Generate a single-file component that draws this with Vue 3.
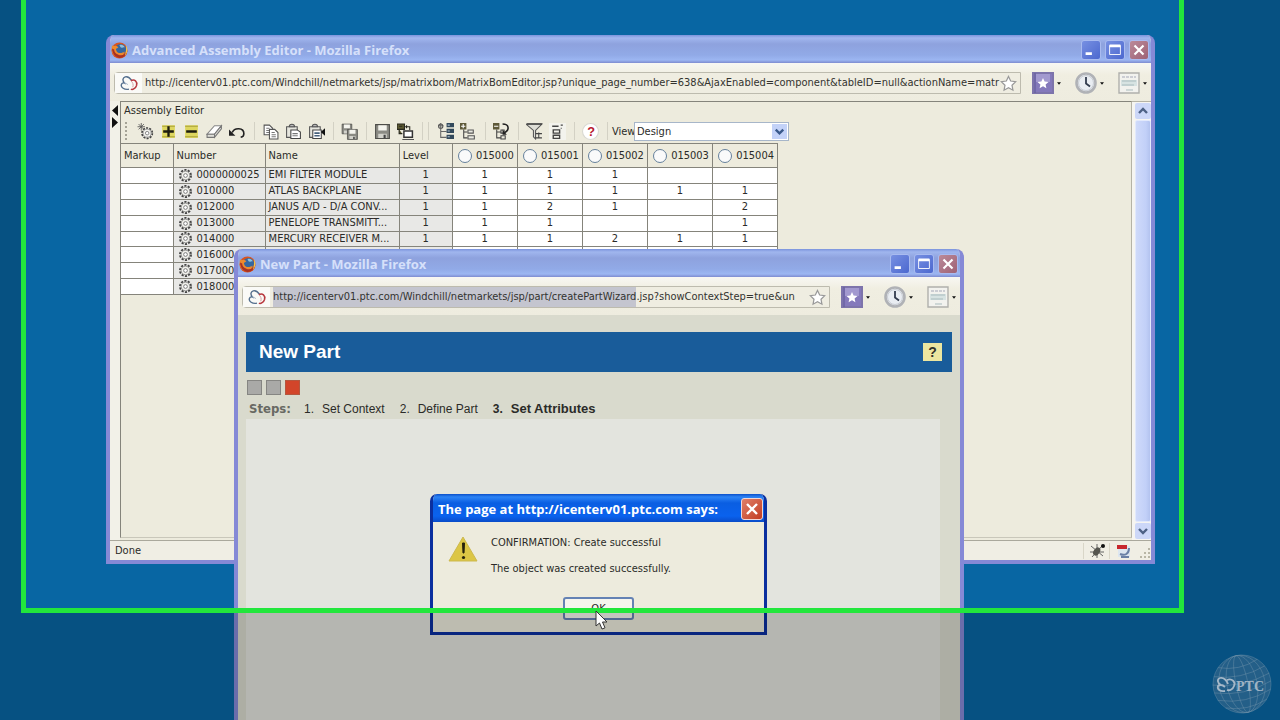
<script setup>
import { ref, onMounted } from 'vue'

const editorUrl = ref('http://icenterv01.ptc.com/Windchill/netmarkets/jsp/matrixbom/MatrixBomEditor.jsp?unique_page_number=638&AjaxEnabled=component&tableID=null&actionName=matr')
const partUrl = ref('http://icenterv01.ptc.com/Windchill/netmarkets/jsp/part/createPartWizard.jsp?showContextStep=true&un')
const partUrlInput = ref(null)
const view = ref('Design')

const gear = '<circle cx="8" cy="8" r="5.6" fill="#f4f4ee" stroke="#444" stroke-width="2.6" stroke-dasharray="2.2 1.3"/><circle cx="8" cy="8" r="5" fill="#f1f1ec"/><circle cx="8" cy="8" r="4.6" fill="none" stroke="#777" stroke-width=".8"/><circle cx="8" cy="8" r="2" fill="#fff" stroke="#777"/>'
const page = '<path d="M2 2h5l3 3v6H2z" fill="#fff" stroke="#555"/><path d="M4 5h3M4 7h4M4 9h4" stroke="#777"/>'
const clip = '<path d="M1.5 3.5h10v10h-10z" fill="#e6e6de" stroke="#555"/><path d="M4 3.5c0-3 5-3 5 0z" fill="#bbb" stroke="#555"/>'
const disk = '<path d="M1.5 1.5h13v13h-13z" fill="#8b8b84" stroke="#4d4d49"/><path d="M4 2h8v5H4z" fill="#f4f4ee"/><path d="M4 10h8v4H4z" fill="#d2d2cb"/><path d="M9 11h2v3H9z" fill="#444"/>'

// ツールバーのアイコン（sepは区切り線）
const tools = [
  { name: 'New', svg: '<g transform="translate(3 3) scale(.82)">' + gear + '</g><path d="M4 0v7M.5 3.5h7M1.5 1l5 5M6.5 1l-5 5" stroke="#555" stroke-width=".8"/>' },
  { name: 'Add', svg: '<path d="M2 2h12v12H2z" fill="#ddd65f"/><path d="M2 3h12M2 13h12" stroke="#a9a13b"/><path d="M8 3v10M3 8h10" stroke="#1b1b10" stroke-width="2.2"/>' },
  { name: 'Remove', svg: '<path d="M2 2h12v12H2z" fill="#ddd65f"/><path d="M2 3h12M2 13h12" stroke="#a9a13b"/><path d="M3 8h10" stroke="#1b1b10" stroke-width="2.4"/>' },
  { name: 'Erase', svg: '<path d="M1 10.500 8 2.500h6.500L8 10.500z" fill="#fff" stroke="#888"/><path d="M1 10.500v3h7v-3zM8 13.500l6.500-8v-3L8 10.500z" fill="#e0e0da" stroke="#777"/>' },
  { name: 'Undo', svg: '<path d="M3 9c2-5 11-5 11 1 0 1.500-1 3-3 3.500" fill="none" stroke="#222" stroke-width="1.500"/><path d="M0 6v6h6z" fill="#222"/>' },
  { sep: 10 },
  { name: 'Copy', svg: page + '<g transform="translate(5 4)">' + page + '</g>' },
  { name: 'Paste', svg: clip + '<path d="M5.500 6.500h6l3 2v6h-9z" fill="#fff" stroke="#444"/><path d="M7 10h5M7 12h5" stroke="#777"/>' },
  { name: 'Paste special', svg: clip + '<path d="M4.500 6.500h8v8h-8z" fill="#fff" stroke="#444"/><path d="M6 9.500h5M6 12h5" stroke="#47617c" stroke-width="1.500"/><path d="M16 5v7l-4-3.500z" fill="#111"/>' },
  { sep: 10 },
  { name: 'Save all', svg: '<g transform="scale(.7)">' + disk + '</g><g transform="translate(5 5) scale(.72)">' + disk + '</g>' },
  { sep: 10 },
  { name: 'Save', svg: disk },
  { name: 'Check in', svg: '<path d="M0 1h7v5H0zM2 6v4h3" fill="#5c5931" stroke="#28281f"/><path d="M2 3h3M9 2v3M7 3.500h5v3" stroke="#28281f" fill="none"/><path d="M6.500 7.500h8v6h-8z" fill="#fff" stroke="#333" stroke-width="1.400"/><path d="M5 15.500h11" stroke="#555"/>' },
  { sep: 17, double: true },
  { name: 'Expand all', svg: '<path d="M1 2.500h5M3.500 0v14M3.500 8H9M3.500 13.500H9" stroke="#666" fill="none"/><circle cx="3.500" cy="3" r="2" fill="none" stroke="#555"/><path d="M9 0h7v4H9zM9 5.500h7v4H9zM9 11h7v4H9z" fill="#33495c"/><path d="M10 2h2M10 7.500h2M10 13h2" stroke="#b7c9d6"/>' },
  { name: 'Expand', svg: '<path d="M0 0h6v6H0z" fill="#5f5a39"/><path d="M1 3h4M3 1v4" stroke="#fff"/><path d="M3.500 6v8H7M3.500 8.500H7" stroke="#444" fill="none"/><path d="M7.500 6.500h5v3h-5zM7.500 12h6v3h-6z" fill="#e9e9e1" stroke="#555"/>' },
  { sep: 10 },
  { name: 'Collapse', svg: '<path d="M0 0h6v6H0z" fill="#5f5a39"/><path d="M1 3h4" stroke="#fff"/><path d="M3.500 6v8H7M3.500 8.500H7M7.500 6.500h3v3h-3zM7.500 12h4v3h-4z" stroke="#444" fill="none"/><path d="M9 1c6 0 7 5 2 8" stroke="#222" stroke-width="1.500" fill="none"/><path d="M9 6v5h4z" fill="#222"/>' },
  { sep: 10 },
  { name: 'Filter', svg: '<path d="M0 1h15L9 7v8L7 13V7z" fill="#deded6" stroke="#555"/><path d="M1 1h14" stroke="#444" stroke-width="1.500"/><path d="M9 10h6M9 14h6M12 9v5" stroke="#444"/>' },
  { name: 'Structure', svg: '<path d="M0 0h16v16H0z" fill="#f3f3ed"/><path d="M4 6.500h6v3H4zM4 11.500h6v3H4z" fill="none" stroke="#444" stroke-width="1.300"/><path d="M3 3h6" stroke="#444" stroke-width="1.500"/><path d="M11 2h2M11 5h1" stroke="#444"/>' },
  { sep: 10 },
  { name: 'Help', svg: '<circle cx="8" cy="8" r="7.500" fill="#fff" stroke="#d8d8d0"/><text x="5" y="12" font-family="Liberation Sans, sans-serif" font-weight="bold" font-size="12" fill="#b7182f">?</text>' },
  { sep: 10 }
]

const variants = ['015000', '015001', '015002', '015003', '015004']

const parts = [
  { number: '0000000025', name: 'EMI FILTER MODULE', level: '1', qty: ['1', '1', '1', '', ''] },
  { number: '010000', name: 'ATLAS BACKPLANE', level: '1', qty: ['1', '1', '1', '1', '1'] },
  { number: '012000', name: 'JANUS A/D - D/A CONV...', level: '1', qty: ['1', '2', '1', '', '2'] },
  { number: '013000', name: 'PENELOPE TRANSMITT...', level: '1', qty: ['1', '1', '', '', '1'] },
  { number: '014000', name: 'MERCURY RECEIVER M...', level: '1', qty: ['1', '1', '2', '1', '1'] },
  { number: '016000', name: '', level: '', qty: ['', '', '', '', ''] },
  { number: '017000', name: '', level: '', qty: ['', '', '', '', ''] },
  { number: '018000', name: '', level: '', qty: ['', '', '', '', ''] }
]

const firefox = '<circle cx="8" cy="8" r="7.500" fill="#d9541e"/><circle cx="9" cy="7" r="5.200" fill="#35679f"/><path d="M8 3c2-1 4 0 5 2-2 0-3 1-4 0z" fill="#8fc0dc"/><path d="M1 3c1 1 2 1 3 .5 1.500 0 2 1 3 1.500-1 1-3 1-2 3 1 3 5 3 8 1-1 4-5 6-8 4.500C1 12 0 8 1 3z" fill="#ee8a2c"/><path d="M1 6c0 5 3 8 7 9 4 0 7-3 7.500-7C14 12 10 13.500 7 12 4 11 3 9 3 7z" fill="#a83224"/><path d="M14 3c2 3 2 7-1 10 1-3 1.500-6 1-10z" fill="#f5c548"/>'
const ptc = '<path d="M10 15C5 16 1 13 2 10c.5-1.500 1.500-2 3-1.500C3 6 3 3 6 2c3-1 5 1 7 4" fill="none" stroke="#55708e" stroke-width="1.500"/><path d="M5 8.500c2 0 3 1 4 2" fill="none" stroke="#9fb1c6"/><path d="M12 6c4-2 7 1 6 5-1 3-4 5-6 4" fill="none" stroke="#b8383f" stroke-width="1.600"/><path d="M12 6c2 2 3 4 2 7" fill="none" stroke="#d49a9c"/>'
const star = '<path d="m9 1.500 2.300 4.900 5.300.7-3.900 3.700 1 5.300L9 13.500l-4.700 2.600 1-5.300L1.400 7.100l5.300-.7z" fill="#fff" stroke="#999" stroke-width="1.300"/>'
const caret = '<path d="M0 0h5L2.500 3z" fill="#111"/>'

const navIcons = [
  { name: 'Bookmarks', svg: '<path d="M1 1h20v20H1z" fill="#8479bb" stroke="#7d74ab" stroke-width="2"/><path d="M4 2h14v8H4z" fill="#a299cf"/><path d="M3 1v20" stroke="#5f5996"/><path d="m11 6 1.600 3.500 3.900.4-2.900 2.600.8 3.800-3.400-2-3.400 2 .8-3.800L5.500 9.900l3.900-.4z" fill="#fff"/>' },
  { name: 'History', svg: '<circle cx="11" cy="11" r="9.500" fill="#e9edf2" stroke="#b0b2b6" stroke-width="2.600"/><circle cx="11" cy="11" r="7.500" fill="none" stroke="#c9cdd4"/><path d="M11 5v6.500l4 3" fill="none" stroke="#333c4e" stroke-width="1.800"/>' },
  { name: 'Page', svg: '<path d="M1 1h20v20H1z" fill="#f2f2ee" stroke="#b0b0ac" stroke-width="1.400"/><path d="M4 5h14" stroke="#a5a8b8" stroke-dasharray="3 1"/><path d="M3 8h16v6H3z" fill="#d7e3e2"/><path d="M4 9h14M4 13h12M8 18h7" stroke="#a9bbbd"/>' }
]

// URLの前半を選択状態にする
onMounted(() => {
  const input = partUrlInput.value
  input.focus({ preventScroll: true })
  input.setSelectionRange(0, partUrl.value.indexOf('.jsp'))
})
</script>

<template>
  <main class="desktop">
    <section class="window editor-window">
      <header class="title-bar">
        <svg class="app-icon" viewBox="0 0 16 16" v-html="firefox"></svg>
        <h1 class="window-title">Advanced Assembly Editor - Mozilla Firefox</h1>
        <button class="win-button" aria-label="Minimize"><svg viewBox="0 0 20 20"><path d="M4 14h7" stroke="#fff" stroke-width="3" /></svg></button>
        <button class="win-button" aria-label="Maximize"><svg viewBox="0 0 20 20"><path d="M4 5h12v10H4z" fill="none" stroke="#fff" /><path d="M4 5.500h12" stroke="#fff" stroke-width="3" /></svg></button>
        <button class="win-button win-close" aria-label="Close"><svg viewBox="0 0 20 20"><path d="m5 5 10 10M15 5 5 15" stroke="#fff" stroke-width="2.400" /></svg></button>
      </header>
      <nav class="nav-bar">
        <div class="address">
          <span class="favicon"><svg viewBox="0 0 20 18" v-html="ptc"></svg></span>
          <input v-model="editorUrl" class="url" type="text" aria-label="Editor address" />
          <svg class="star" viewBox="0 0 18 18" v-html="star"></svg>
        </div>
        <button v-for="icon in navIcons" :key="icon.name" class="nav-button" :aria-label="icon.name">
          <svg class="nav-icon" viewBox="0 0 22 22" v-html="icon.svg"></svg>
          <svg class="caret" viewBox="0 0 5 3" v-html="caret"></svg>
        </button>
      </nav>
      <div class="editor-body">
        <div class="splitter">
          <svg viewBox="0 0 8 24"><path d="M7 0v11L1 5.500zM1 12v11l6-5.500z" fill="#111" /></svg>
        </div>
        <div class="editor-frame">
          <h2 class="editor-title">Assembly Editor</h2>
          <div class="toolbar">
            <span class="grip"></span>
            <template v-for="(tool, i) in tools" :key="i">
              <span v-if="tool.sep" class="sep" :class="{ double: tool.double }"></span>
              <button v-else class="tool" :aria-label="tool.name">
                <svg viewBox="0 0 16 16" v-html="tool.svg"></svg>
              </button>
            </template>
            <label class="view-label" for="view">View</label>
            <span class="view-box">
              <select id="view" v-model="view" class="view-select">
                <option>Design</option>
              </select>
              <svg class="view-arrow" viewBox="0 0 16 16"><path d="m4 6 4 4 4-4" fill="none" stroke="#39598b" stroke-width="2.500" /></svg>
            </span>
          </div>
          <table class="bom">
            <colgroup>
              <col class="col-markup" />
              <col class="col-number" />
              <col class="col-name" />
              <col class="col-level" />
              <col v-for="v in variants" :key="v" class="col-variant" />
            </colgroup>
            <thead>
              <tr>
                <th>Markup</th>
                <th>Number</th>
                <th>Name</th>
                <th>Level</th>
                <th v-for="v in variants" :key="v">
                  <label class="variant"><input type="radio" name="variant" :value="v" />{{ v }}</label>
                </th>
              </tr>
            </thead>
            <tbody>
              <tr v-for="part in parts" :key="part.number">
                <td></td>
                <td class="shaded">
                  <span class="part-number"><svg viewBox="0 0 16 16" v-html="gear"></svg>{{ part.number }}</span>
                </td>
                <td class="shaded">{{ part.name }}</td>
                <td class="shaded center">{{ part.level }}</td>
                <td v-for="(q, i) in part.qty" :key="i" class="center">{{ q }}</td>
              </tr>
            </tbody>
          </table>
        </div>
        <div class="scrollbar">
          <button class="scroll-button" aria-label="Scroll up"><svg viewBox="0 0 16 16"><path d="m4 10 4-4 4 4" fill="none" stroke="#4d6185" stroke-width="2.400" /></svg></button>
          <div class="scroll-thumb"></div>
          <button class="scroll-button" aria-label="Scroll down"><svg viewBox="0 0 16 16"><path d="m4 6 4 4 4-4" fill="none" stroke="#4d6185" stroke-width="2.400" /></svg></button>
        </div>
      </div>
      <footer class="status-bar">
        <span class="status-text">Done</span>
        <span class="status-cell">
          <svg viewBox="0 0 18 16"><path d="m2 3 12 10M13 3 3 14M8 1v14M1 9h14" stroke="#666" /><ellipse cx="8" cy="8.500" rx="3" ry="4.500" fill="#55554f" transform="rotate(35 8 8)" /><circle cx="14" cy="3" r="2" fill="#111" /></svg>
        </span>
        <span class="status-cell">
          <svg viewBox="0 0 18 16"><path d="M3 3h12v11H3z" fill="#dde6f0" /><path d="M2 2h10v4H2z" fill="#c8272e" /><path d="M5 11c5 2 9 0 9-6M6 14h8" stroke="#6b80a5" stroke-width="2" fill="none" /></svg>
        </span>
        <svg class="resize" viewBox="0 0 12 12"><path d="M9 1h2v2H9zM9 5h2v2H9zM9 9h2v2H9zM5 5h2v2H5zM5 9h2v2H5zM1 9h2v2H1z" fill="#b9b6a6" /></svg>
      </footer>
    </section>

    <section class="window part-window">
      <header class="title-bar">
        <svg class="app-icon" viewBox="0 0 16 16" v-html="firefox"></svg>
        <h1 class="window-title">New Part - Mozilla Firefox</h1>
        <button class="win-button" aria-label="Minimize"><svg viewBox="0 0 20 20"><path d="M4 14h7" stroke="#fff" stroke-width="3" /></svg></button>
        <button class="win-button" aria-label="Maximize"><svg viewBox="0 0 20 20"><path d="M4 5h12v10H4z" fill="none" stroke="#fff" /><path d="M4 5.500h12" stroke="#fff" stroke-width="3" /></svg></button>
        <button class="win-button win-close" aria-label="Close"><svg viewBox="0 0 20 20"><path d="m5 5 10 10M15 5 5 15" stroke="#fff" stroke-width="2.400" /></svg></button>
      </header>
      <nav class="nav-bar">
        <div class="address">
          <span class="favicon"><svg viewBox="0 0 20 18" v-html="ptc"></svg></span>
          <input ref="partUrlInput" v-model="partUrl" class="url" type="text" aria-label="Wizard address" />
          <svg class="star" viewBox="0 0 18 18" v-html="star"></svg>
        </div>
        <button v-for="icon in navIcons" :key="icon.name" class="nav-button" :aria-label="icon.name">
          <svg class="nav-icon" viewBox="0 0 22 22" v-html="icon.svg"></svg>
          <svg class="caret" viewBox="0 0 5 3" v-html="caret"></svg>
        </button>
      </nav>
      <div class="wizard">
        <div class="banner">
          <h2 class="banner-title">New Part</h2>
          <button class="banner-help" aria-label="Help">?</button>
        </div>
        <div class="progress">
          <span class="step-box"></span>
          <span class="step-box"></span>
          <span class="step-box current"></span>
        </div>
        <div class="steps">
          <strong class="steps-label">Steps:</strong>
          <span class="step-number">1.</span>
          <a class="step" href="#">Set Context</a>
          <span class="step-number">2.</span>
          <a class="step" href="#">Define Part</a>
          <span class="step-number active">3.</span>
          <a class="step active" href="#">Set Attributes</a>
        </div>
        <div class="wizard-panel"></div>
      </div>
    </section>

    <section class="dialog" role="alertdialog">
      <header class="dialog-bar">
        <h2 class="dialog-title">The page at http://icenterv01.ptc.com says:</h2>
        <button class="dialog-close" aria-label="Close"><svg viewBox="0 0 20 20"><path d="m5 5 10 10M15 5 5 15" stroke="#fff" stroke-width="2.400" /></svg></button>
      </header>
      <div class="dialog-body">
        <svg class="warning" viewBox="0 0 30 26"><path d="M15 1 29 25H1z" fill="#dcc645" stroke="#cdb94e" stroke-linejoin="round" /><path d="M14.500 7h2l-.5 10h-1z" fill="#26220c" stroke="#26220c" /><circle cx="15.500" cy="21.500" r="1.600" fill="#26220c" /></svg>
        <div class="message">
          <p>CONFIRMATION: Create successful</p>
          <p>The object was created successfully.</p>
        </div>
      </div>
      <div class="dialog-actions">
        <button class="ok">OK</button>
      </div>
    </section>

    <svg class="globe" viewBox="0 0 66 60">
      <circle cx="33" cy="30" r="29" fill="#3d7fae" fill-opacity=".7" />
      <g fill="none" stroke="#8fb9d6" stroke-width=".8" stroke-opacity=".5">
        <circle cx="33" cy="30" r="29" />
        <g transform="rotate(-12 33 30)">
          <ellipse cx="33" cy="30" rx="23" ry="29" />
          <ellipse cx="33" cy="30" rx="15" ry="29" />
          <ellipse cx="33" cy="30" rx="6" ry="29" />
          <path d="M13 9q20 8 40 0M7 17q26 9 52 0M4 25q29 9 58 0M4 33q29 10 58 0M6 41q27 10 54 0M12 50q21 8 42 0" />
        </g>
      </g>
      <g transform="translate(5 22)" fill="none" stroke="#cfe6fa" stroke-width="1.800">
        <path d="M11 15c-5 1-8-2-7-5 1-1 2-1 3-1-4-2-4-6-1-7 4-1 7 3 8 6M13 4c5-2 9 2 7 6-1 3-4 5-7 4M7 9c2 0 3 1 4 2" />
      </g>
      <text x="27" y="37" font-family="Liberation Serif, serif" font-weight="bold" font-size="14" fill="#c8e0f6">PTC</text>
    </svg>

    <div class="capture-frame"></div>

    <svg class="cursor" viewBox="0 0 13 20"><path d="M1 1v15l3.500-3 2.500 6 3-1.200-2.500-5.800H12z" fill="#fff" stroke="#333" /></svg>
  </main>
</template>

<style>
html,
body {
  background: #0866a3;
}
</style>

<style scoped>
* {
  box-sizing: border-box;
}

button {
  padding: 0;
  border: 0;
  background: none;
}

svg {
  display: block;
}

h1,
h2,
p {
  margin: 0;
}

.desktop {
  position: relative;
  height: 100vh;
  overflow: hidden;
  background: #0866a3;
  font-family: "DejaVu Sans Condensed", "DejaVu Sans", Tahoma, sans-serif;
  font-size: 11px;
  color: #2b2b28;
}

/* windows */
.window {
  position: absolute;
  display: flex;
  flex-direction: column;
  border: 4px solid #8589d6;
  border-top: 0;
  border-radius: 8px 8px 0 0;
  background: #edebdd;
  overflow: hidden;
}

.editor-window {
  inset: 35px 125px 156px 106px;
}

.part-window {
  inset: 249px 316px 0 234px;
  border-bottom: 0;
}

.title-bar {
  flex: none;
  display: flex;
  align-items: center;
  gap: 4px;
  height: 28px;
  margin: 0 -4px;
  padding: 2px 6px 0 5px;
  background: linear-gradient(#7b93dc 0, #a0b6ee 3px, #8ea2de 9px, #91aae7 20px, #9cb6f2 25px, #7e8bd0 28px);
}

.app-icon {
  width: 17px;
  height: 17px;
}

.window-title {
  flex: 1;
  font: bold 13px/20px "Open Sans", "Noto Sans", sans-serif;
  color: #d6e0fa;
}

.win-button {
  width: 20px;
  height: 20px;
  border: 1px solid #a9bbf0;
  border-radius: 3px;
  background: linear-gradient(135deg, #7790e2, #4c68cf);
}

.win-close {
  background: linear-gradient(135deg, #bb8a99, #9e6275);
}

.nav-bar {
  flex: none;
  display: flex;
  align-items: center;
  height: 38px;
  padding: 2px 4px 0;
  background: linear-gradient(#f8f7f3, #f0eee1 12px, #eeecdf);
}

.address {
  flex: 1;
  display: flex;
  align-items: center;
  height: 22px;
  min-width: 0;
  margin-right: 11px;
  border: 1px solid #bdbbae;
  border-radius: 4px 0 0 4px;
  background: #efede1;
}

.favicon {
  display: flex;
  align-items: center;
  justify-content: center;
  width: 27px;
  height: 20px;
  background: #fafaf7;
}

.favicon svg {
  width: 20px;
  height: 17px;
}

.url {
  flex: 1;
  min-width: 0;
  height: 20px;
  margin: 0 0 0 3px;
  padding: 0;
  border: 0;
  outline: 0;
  background: none;
  font: 11px/20px "DejaVu Sans Condensed", "DejaVu Sans", Tahoma, sans-serif;
  color: #33332f;
  caret-color: transparent;
}

.url::selection {
  background: #c4c5cf;
  color: #33332f;
}

.star {
  width: 17px;
  height: 17px;
  margin-right: 3px;
}

.nav-button {
  display: flex;
  align-items: center;
  gap: 3px;
  width: 30px;
  margin-right: 13px;
}

.nav-button:last-child {
  width: 29px;
  margin-right: 0;
}

.nav-icon {
  width: 22px;
  height: 22px;
}

.caret {
  width: 4px;
  height: 3px;
}

/* assembly editor */
.editor-body {
  flex: 1;
  display: flex;
  min-height: 0;
  border-bottom: 1px solid #aaa89c;
}

.splitter {
  width: 10px;
  padding: 4px 1px;
  background: #f2f1e8;
}

.splitter svg {
  width: 8px;
  height: 24px;
}

.editor-frame {
  flex: 1;
  min-width: 0;
  margin-bottom: 2px;
  border: 1px solid #85847b;
  border-right-color: #b5b3a6;
  border-bottom-color: #c9c7ba;
}

.editor-title {
  padding-left: 3px;
  font-size: 11px;
  font-weight: normal;
  line-height: 17px;
}

.toolbar {
  display: flex;
  align-items: center;
  height: 24px;
  padding-left: 3px;
}

.grip {
  width: 10px;
  height: 18px;
  background: radial-gradient(circle, #a5a396 1px, transparent 1px) left / 4px 4px repeat-y;
}

.tool {
  display: flex;
  justify-content: center;
  width: 23px;
}

.tool svg {
  width: 17px;
  height: 17px;
}

.sep {
  width: 10px;
  height: 18px;
  background: linear-gradient(#d3d1c4, #d3d1c4) center / 1px 100% no-repeat;
}

.sep.double {
  width: 17px;
  border-right: 5px solid transparent;
  border-left: 5px solid transparent;
  background: linear-gradient(90deg, #d3d1c4 1px, transparent 1px 6px, #d3d1c4 6px) padding-box;
}

.view-label {
  width: 22px;
}

.view-box {
  position: relative;
  width: 155px;
}

.view-select {
  appearance: none;
  display: block;
  width: 100%;
  height: 19px;
  padding: 0 2px;
  border: 1px solid #a7b6c9;
  border-radius: 0;
  background: #fff;
  font: 11px/17px "DejaVu Sans Condensed", "DejaVu Sans", Tahoma, sans-serif;
  color: #2b2b28;
}

.view-arrow {
  position: absolute;
  top: 2px;
  right: 2px;
  width: 15px;
  height: 15px;
  background: #c3d2f8;
  pointer-events: none;
}

.bom {
  width: 657px;
  height: 152px;
  table-layout: fixed;
  border-collapse: collapse;
  line-height: 14px;
}

.col-markup {
  width: 52px;
}

.col-number {
  width: 92px;
}

.col-name {
  width: 134px;
}

.col-level {
  width: 53px;
}

.col-variant {
  width: 65px;
}

.bom th {
  height: 24px;
  padding: 0 3px;
  border: 1px solid #85847b;
  font-weight: normal;
  text-align: left;
  white-space: nowrap;
}

.bom th:first-child,
.bom td:first-child {
  border-left: 0;
}

.bom td {
  padding: 0 3px;
  border: 1px solid #85847b;
  background: #fff;
  white-space: nowrap;
  overflow: hidden;
}

.bom td.shaded {
  background: #e8e8e6;
}

.bom td.center {
  text-align: center;
}

.part-number {
  display: flex;
  align-items: center;
  gap: 3px;
  height: 14px;
}

.part-number svg {
  flex: none;
  width: 17px;
  height: 15px;
}

.variant {
  display: flex;
  align-items: center;
  justify-content: flex-end;
  gap: 4px;
}

.variant input {
  appearance: none;
  flex: none;
  width: 14px;
  height: 14px;
  margin: 0;
  border: 1px solid #64809b;
  border-radius: 50%;
  background: #fafafa;
}

.scrollbar {
  display: flex;
  flex-direction: column;
  width: 19px;
  padding: 1px 0 1px 3px;
  border-top: 1px solid #b5b3a6;
  background: #f6f5f1;
}

.scroll-button {
  height: 16px;
  border-radius: 2px;
  background: #ccd7f8;
}

.scroll-button svg {
  width: 16px;
  height: 16px;
}

.scroll-thumb {
  flex: 1;
  margin: 1px 0;
  border: 1px solid #e2e9fc;
  border-radius: 2px;
  background: linear-gradient(90deg, #cfdafa, #c2d0f8 70%, #b3c3ef);
}

.status-bar {
  flex: none;
  display: flex;
  align-items: center;
  height: 19px;
  padding-left: 5px;
  background: #f0eee4;
}

.status-text {
  flex: 1;
}

.status-cell {
  width: 26px;
  padding-left: 5px;
  border-left: 1px solid #d9d6c8;
}

.status-cell svg {
  width: 18px;
  height: 16px;
}

.resize {
  width: 12px;
  height: 12px;
  margin-top: 4px;
  margin-left: 4px;
}

/* new part wizard */
.wizard {
  flex: 1;
  display: flex;
  flex-direction: column;
  padding: 17px 8px 0;
  background: #d9dacd;
}

.banner {
  display: flex;
  align-items: center;
  justify-content: space-between;
  height: 40px;
  padding: 0 10px 0 13px;
  background: #195c9a;
}

.banner-title {
  font: bold 19px/24px "Liberation Sans", Arial, sans-serif;
  color: #fff;
}

.banner-help {
  width: 19px;
  height: 18px;
  background: #ece6a0;
  font: bold 14px/18px "Liberation Sans", Arial, sans-serif;
  color: #33332a;
}

.progress {
  display: flex;
  gap: 4px;
  margin: 8px 0 4px 1px;
}

.step-box {
  width: 15px;
  height: 15px;
  border: 1px solid #858582;
  background: #a9a9a7;
}

.step-box.current {
  border-color: #b3573f;
  background: #d2452a;
}

.steps {
  display: flex;
  align-items: center;
  height: 20px;
  padding-left: 3px;
  font: 12px/18px "Liberation Sans", Arial, sans-serif;
  white-space: nowrap;
}

.steps-label {
  width: 55px;
  font: bold 13px/18px "DejaVu Sans Condensed", "DejaVu Sans", Verdana, sans-serif;
  color: #686963;
}

.step-number {
  width: 18px;
}

.step {
  margin-right: 15px;
  color: #2b2b28;
  text-decoration: none;
}

.active {
  font-weight: bold;
}

.step.active {
  font-size: 13px;
}

.wizard-panel {
  flex: 1;
  margin-right: 12px;
  background: #e3e4de;
}

/* confirmation */
.dialog {
  position: absolute;
  top: 494px;
  left: 430px;
  width: 337px;
  border: 3px solid #0b2f9f;
  border-top: 0;
  border-radius: 7px 7px 0 0;
  background: #edebdd;
  overflow: hidden;
}

.dialog-bar {
  display: flex;
  align-items: center;
  justify-content: space-between;
  height: 28px;
  margin: 0 -3px;
  padding: 2px 4px 0 8px;
  background: linear-gradient(#0b4fc9 0, #2c83f5 3px, #0a5ee2 9px, #0a62ee 22px, #0a4cc8 28px);
}

.dialog-title {
  font: bold 13px/20px "Open Sans", "Noto Sans", sans-serif;
  color: #fff;
}

.dialog-close {
  width: 22px;
  height: 22px;
  border: 1px solid #f0d6d6;
  border-radius: 3px;
  background: linear-gradient(135deg, #e08069, #c23c22);
}

.dialog-body {
  display: flex;
  gap: 13px;
  padding: 12px 15px 0;
}

.warning {
  width: 30px;
  height: 26px;
  margin-top: 2px;
}

.message {
  display: grid;
  gap: 8px;
  line-height: 18px;
}

.dialog-actions {
  display: flex;
  justify-content: center;
  padding: 19px 0 12px;
}

.ok {
  width: 71px;
  height: 23px;
  border: 2px solid #6482b4;
  border-radius: 3px;
  background: #f6f5ee;
  font: 11px/18px "DejaVu Sans Condensed", "DejaVu Sans", Tahoma, sans-serif;
  color: #2b2b28;
}

.globe {
  position: absolute;
  right: 5px;
  bottom: 6px;
  width: 66px;
  height: 60px;
}

/* recorded area, everything outside it is dimmed */
.capture-frame {
  position: absolute;
  inset: -5px 96px 107px 21px;
  border: 5px solid #22e63c;
  box-shadow: 0 0 0 2000px rgba(0, 0, 0, 0.2);
  pointer-events: none;
}

.cursor {
  position: absolute;
  top: 610px;
  left: 595px;
  width: 13px;
  height: 20px;
}
</style>
